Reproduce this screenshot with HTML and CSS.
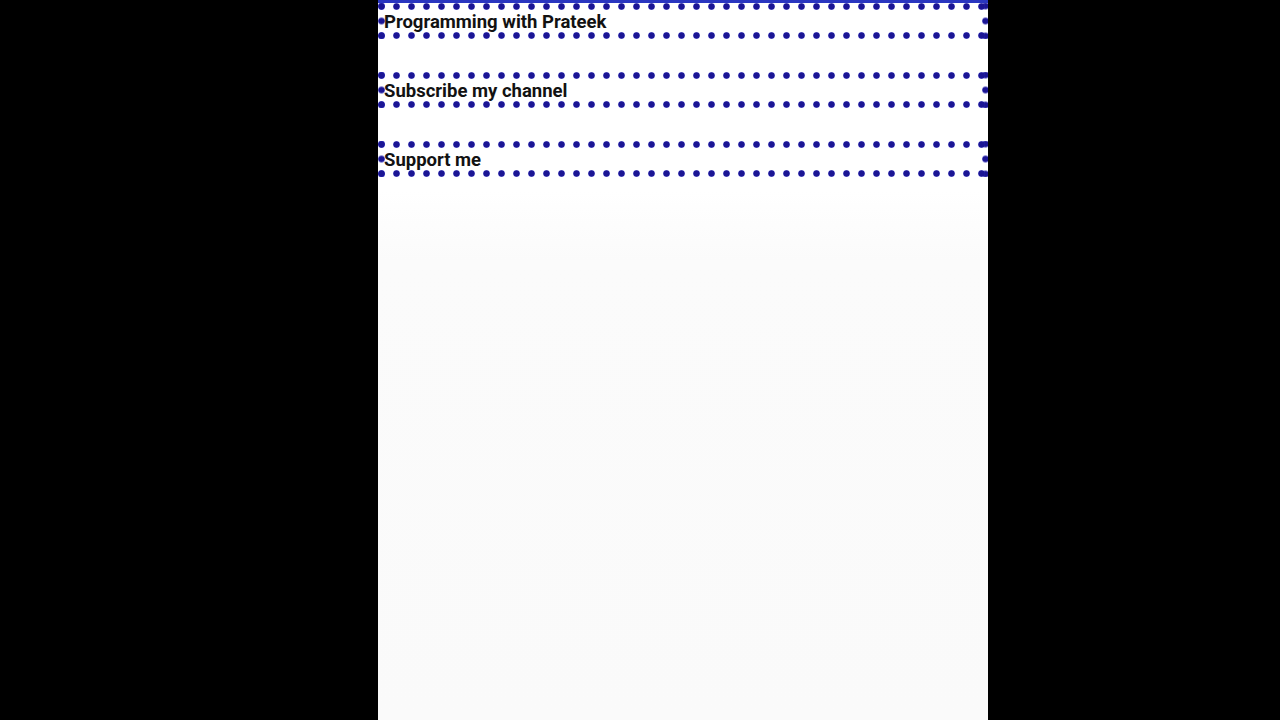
FILE: index.html
```html
<!DOCTYPE html>
<html>
<head>
<meta charset="utf-8">
<link rel="stylesheet" href="styles.css">
</head>
<body>
<div class="stage">
  <main class="screen">
    <div class="topline"></div>
    <ul class="list">
      <li class="item">Programming with Prateek</li>
      <li class="item">Subscribe my channel</li>
      <li class="item">Support me</li>
    </ul>
  </main>
</div>
</body>
</html>
```
FILE: styles.css
```css
html, body {
  margin: 0;
  padding: 0;
  background: #000;
  height: 100%;
}
.stage {
  display: flex;
  height: 720px;
  padding-left: 378px;
  box-sizing: border-box;
}
.screen {
  width: 610px;
  height: 720px;
  background: linear-gradient(#ffffff 0, #ffffff 190px, #fbfbfb 260px, #fafafa 100%);
  overflow: hidden;
}
.topline {
  height: 3px;
  background: #2a36c0;
}
.list {
  list-style: none;
  margin: 0;
  padding: 0;
  display: flex;
  flex-direction: column;
  gap: 33px;
}
.item {
  height: 36px;
  box-sizing: border-box;
  padding-left: 6px;
  padding-top: 1px;
  display: flex;
  align-items: center;
  font-family: Roboto, "Liberation Sans", sans-serif;
  font-weight: 700;
  font-size: 18.5px;
  color: #121212;
  --dot: radial-gradient(circle at center, #1b1594 0, #1b1594 2.8px, rgba(40,40,200,0.45) 3.4px, transparent 3.9px);
  background-image: var(--dot), var(--dot), var(--dot), var(--dot);
  background-size: 15px 7px, 15px 7px, 7px 15px, 7px 15px;
  background-repeat: repeat-x, repeat-x, repeat-y, repeat-y;
  background-position: -4px 0, -4px 100%, 0 -4.5px, calc(100% + 1px) -4.5px;
}
```
